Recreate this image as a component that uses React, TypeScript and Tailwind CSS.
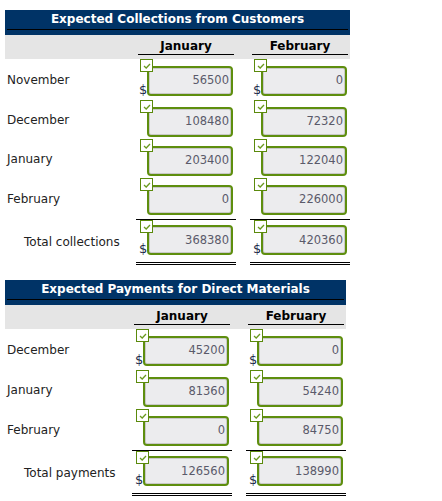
import React from "react";

interface Row {
  label: string;
  jan: string;
  feb: string;
  dollar?: boolean;
}

interface TableProps {
  title: string;
  labelWidth: string;
  rows: Row[];
  total: Row;
}

const CheckMark = () => (
  <span className="absolute left-[4px] top-0 z-10 flex h-[13px] w-[13px] items-center justify-center border border-[#5b8a0c] bg-white">
    <svg width="8" height="6" viewBox="0 0 8 6">
      <polyline points="1,3 3.2,5 7,1" fill="none" stroke="#6a9a1f" strokeWidth="1.3" />
    </svg>
  </span>
);

const ValueCell = ({ value, dollar }: { value: string; dollar?: boolean }) => (
  <div className="relative flex items-end pl-[3px] pt-[7px]">
    <CheckMark />
    <span className="w-[8px] text-[13px] leading-[13px] text-[#1c2a4a]">{dollar ? "$" : ""}</span>
    <div className="flex h-[30px] w-[86px] items-center justify-end rounded-[4px] border-2 border-[#5e8e0e] bg-[#ececee] pr-[2px] text-[11.5px] text-[#5a5a6a] shadow-[inset_0_0_0_1px_#c9c9c9]">
      {value}
    </div>
  </div>
);

const TotalCell = ({ value }: { value: string }) => (
  <div className="w-[100px] border-t border-b-[3px] border-double border-black pb-[7px] [border-top-style:solid]">
    <div className="relative flex items-end pl-[3px] pt-[5px]">
      <CheckMark />
      <span className="w-[8px] text-[13px] leading-[13px] text-[#1c2a4a]">$</span>
      <div className="flex h-[30px] w-[86px] items-start justify-end rounded-[4px] border-2 border-[#5e8e0e] bg-[#ececee] pr-[2px] pt-[5px] text-[11.5px] text-[#5a5a6a] shadow-[inset_0_0_0_1px_#c9c9c9]">
        {value}
      </div>
    </div>
  </div>
);

const SummaryTable = ({ title, labelWidth, rows, total }: TableProps) => {
  return (
    <div className="w-fit">
      <div className="bg-[#003366] px-[2px] pb-[5px]">
        <div className="h-[20px] border-b border-black text-center text-[12px] font-bold leading-[19px] text-white">
          {title}
        </div>
      </div>
      <div className="flex h-[24px] bg-[#e5e5e5] pt-[3px]">
        <div className={labelWidth} />
        <div className="w-[100px] px-[2px]">
          <div className="h-[17px] border-b border-black text-center text-[12px] font-bold leading-[16px] text-black">January</div>
        </div>
        <div className="w-[14px]" />
        <div className="w-[100px] px-[2px]">
          <div className="h-[17px] border-b border-black text-center text-[12px] font-bold leading-[16px] text-black">February</div>
        </div>
      </div>
      {rows.map((r, i) => (
        <div
          key={r.label}
          className={`flex ${i === 0 || i === rows.length - 1 ? "h-[41px]" : "h-[39px]"}`}
        >
          <div className={`${labelWidth} flex items-center pl-[2px] text-[12px] text-[#222]`}>{r.label}</div>
          <div className="w-[100px]">
            <ValueCell value={r.jan} dollar={r.dollar} />
          </div>
          <div className="w-[14px]" />
          <div className="w-[100px]">
            <ValueCell value={r.feb} dollar={r.dollar} />
          </div>
        </div>
      ))}
      <div className="flex">
        <div className={`${labelWidth} flex items-center pl-[19px] text-[12px] text-[#222]`}>{total.label}</div>
        <TotalCell value={total.jan} />
        <div className="w-[14px]" />
        <TotalCell value={total.feb} />
      </div>
    </div>
  );
};

export default function App() {
  return (
    <div className="min-h-[501px] w-[442px] bg-white pl-[5px] pt-[10px] font-['DejaVu_Sans',sans-serif]">
      <SummaryTable
        title="Expected Collections from Customers"
        labelWidth="w-[131px]"
        rows={[
          { label: "November", jan: "56500", feb: "0", dollar: true },
          { label: "December", jan: "108480", feb: "72320" },
          { label: "January", jan: "203400", feb: "122040" },
          { label: "February", jan: "0", feb: "226000" },
        ]}
        total={{ label: "Total collections", jan: "368380", feb: "420360" }}
      />
      <div className="h-[15px]" />
      <SummaryTable
        title="Expected Payments for Direct Materials"
        labelWidth="w-[127px]"
        rows={[
          { label: "December", jan: "45200", feb: "0", dollar: true },
          { label: "January", jan: "81360", feb: "54240" },
          { label: "February", jan: "0", feb: "84750" },
        ]}
        total={{ label: "Total payments", jan: "126560", feb: "138990" }}
      />
    </div>
  );
}
